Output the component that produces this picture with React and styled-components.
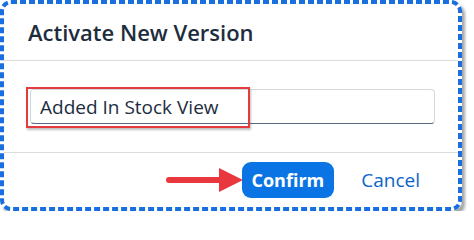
import React from "react";
import styled, { createGlobalStyle } from "styled-components";

const GlobalStyle = createGlobalStyle`
  html, body {
    margin: 0;
    padding: 0;
    background: #ffffff;
  }
  body {
    font-family: "Open Sans", "Liberation Sans", sans-serif;
    color: #32363a;
  }
`;

const Frame = styled.div`
  position: relative;
  width: 462px;
  height: 211px;
  background: #ffffff;
  border-radius: 10px;
  box-shadow: 3px 4px 3px rgba(0, 0, 0, 0.35);
`;

const DashedEdge = styled.svg`
  position: absolute;
  inset: 0;
  pointer-events: none;
`;

const Dialog = styled.div`
  display: flex;
  flex-direction: column;
  height: 100%;
  padding: 4px;
  box-sizing: border-box;
`;

const Header = styled.div`
  display: flex;
  align-items: center;
  height: 56px;
  padding-left: 24px;
  border-bottom: 1px solid #dcdcdc;
`;

const Title = styled.h1`
  margin: 0;
  font-size: 22px;
  font-weight: 600;
  color: #1d2d3e;
`;

const Content = styled.div`
  display: flex;
  align-items: center;
  height: 91px;
  padding: 0 23px 0 26px;
  border-bottom: 1px solid #dcdcdc;
`;

const InputWrap = styled.div`
  position: relative;
  flex: 1;
`;

const Input = styled.input`
  display: block;
  width: 100%;
  height: 35px;
  box-sizing: border-box;
  padding: 0 9px;
  border: 1px solid #d5d9dd;
  border-bottom: 1px solid #556b82;
  border-radius: 4px;
  background: #ffffff;
  font-family: inherit;
  font-size: 19px;
  color: #1d2d3e;
  outline: none;
`;

const Highlight = styled.div`
  position: absolute;
  left: -4px;
  top: -2px;
  width: 224px;
  height: 41px;
  box-sizing: border-box;
  border: 2px solid #e53a3f;
  box-shadow: 1px 2px 2px rgba(0, 0, 0, 0.25);
  pointer-events: none;
`;

const Footer = styled.div`
  display: flex;
  align-items: center;
  justify-content: flex-end;
  flex: 1;
  padding-right: 24px;
`;

const Arrow = styled.svg`
  display: block;
  margin-right: -1px;
`;

const Button = styled.button`
  height: 36px;
  padding: 0 ${(p) => (p.$primary ? "10px" : "14px")};
  margin-left: ${(p) => (p.$primary ? "0" : "13px")};
  border: none;
  border-radius: 9px;
  background: ${(p) => (p.$primary ? "#0b74e5" : "transparent")};
  color: ${(p) => (p.$primary ? "#ffffff" : "#0a64c8")};
  font-family: inherit;
  font-size: ${(p) => (p.$primary ? "18px" : "19px")};
  font-weight: ${(p) => (p.$primary ? 700 : 500)};
  cursor: pointer;
`;

const App = () => {
  return (
    <>
      <GlobalStyle />
      <Frame>
        <Dialog>
          <Header>
            <Title>Activate New Version</Title>
          </Header>
          <Content>
            <InputWrap>
              <Input defaultValue="Added In Stock View" />
              <Highlight />
            </InputWrap>
          </Content>
          <Footer>
            <Arrow width="78" height="28" viewBox="0 0 78 28">
              <line x1="4" y1="14" x2="58" y2="14" stroke="#e8383d" strokeWidth="6" strokeLinecap="round" />
              <polygon points="54,2 78,14 54,26" fill="#e8383d" />
            </Arrow>
            <Button $primary>Confirm</Button>
            <Button>Cancel</Button>
          </Footer>
        </Dialog>
        <DashedEdge width="462" height="211" viewBox="0 0 462 211">
          <rect
            x="2"
            y="2"
            width="458"
            height="207"
            rx="9"
            fill="none"
            stroke="#1a6fe0"
            strokeWidth="4"
            strokeDasharray="6 3"
          />
        </DashedEdge>
      </Frame>
    </>
  );
};

export default App;
